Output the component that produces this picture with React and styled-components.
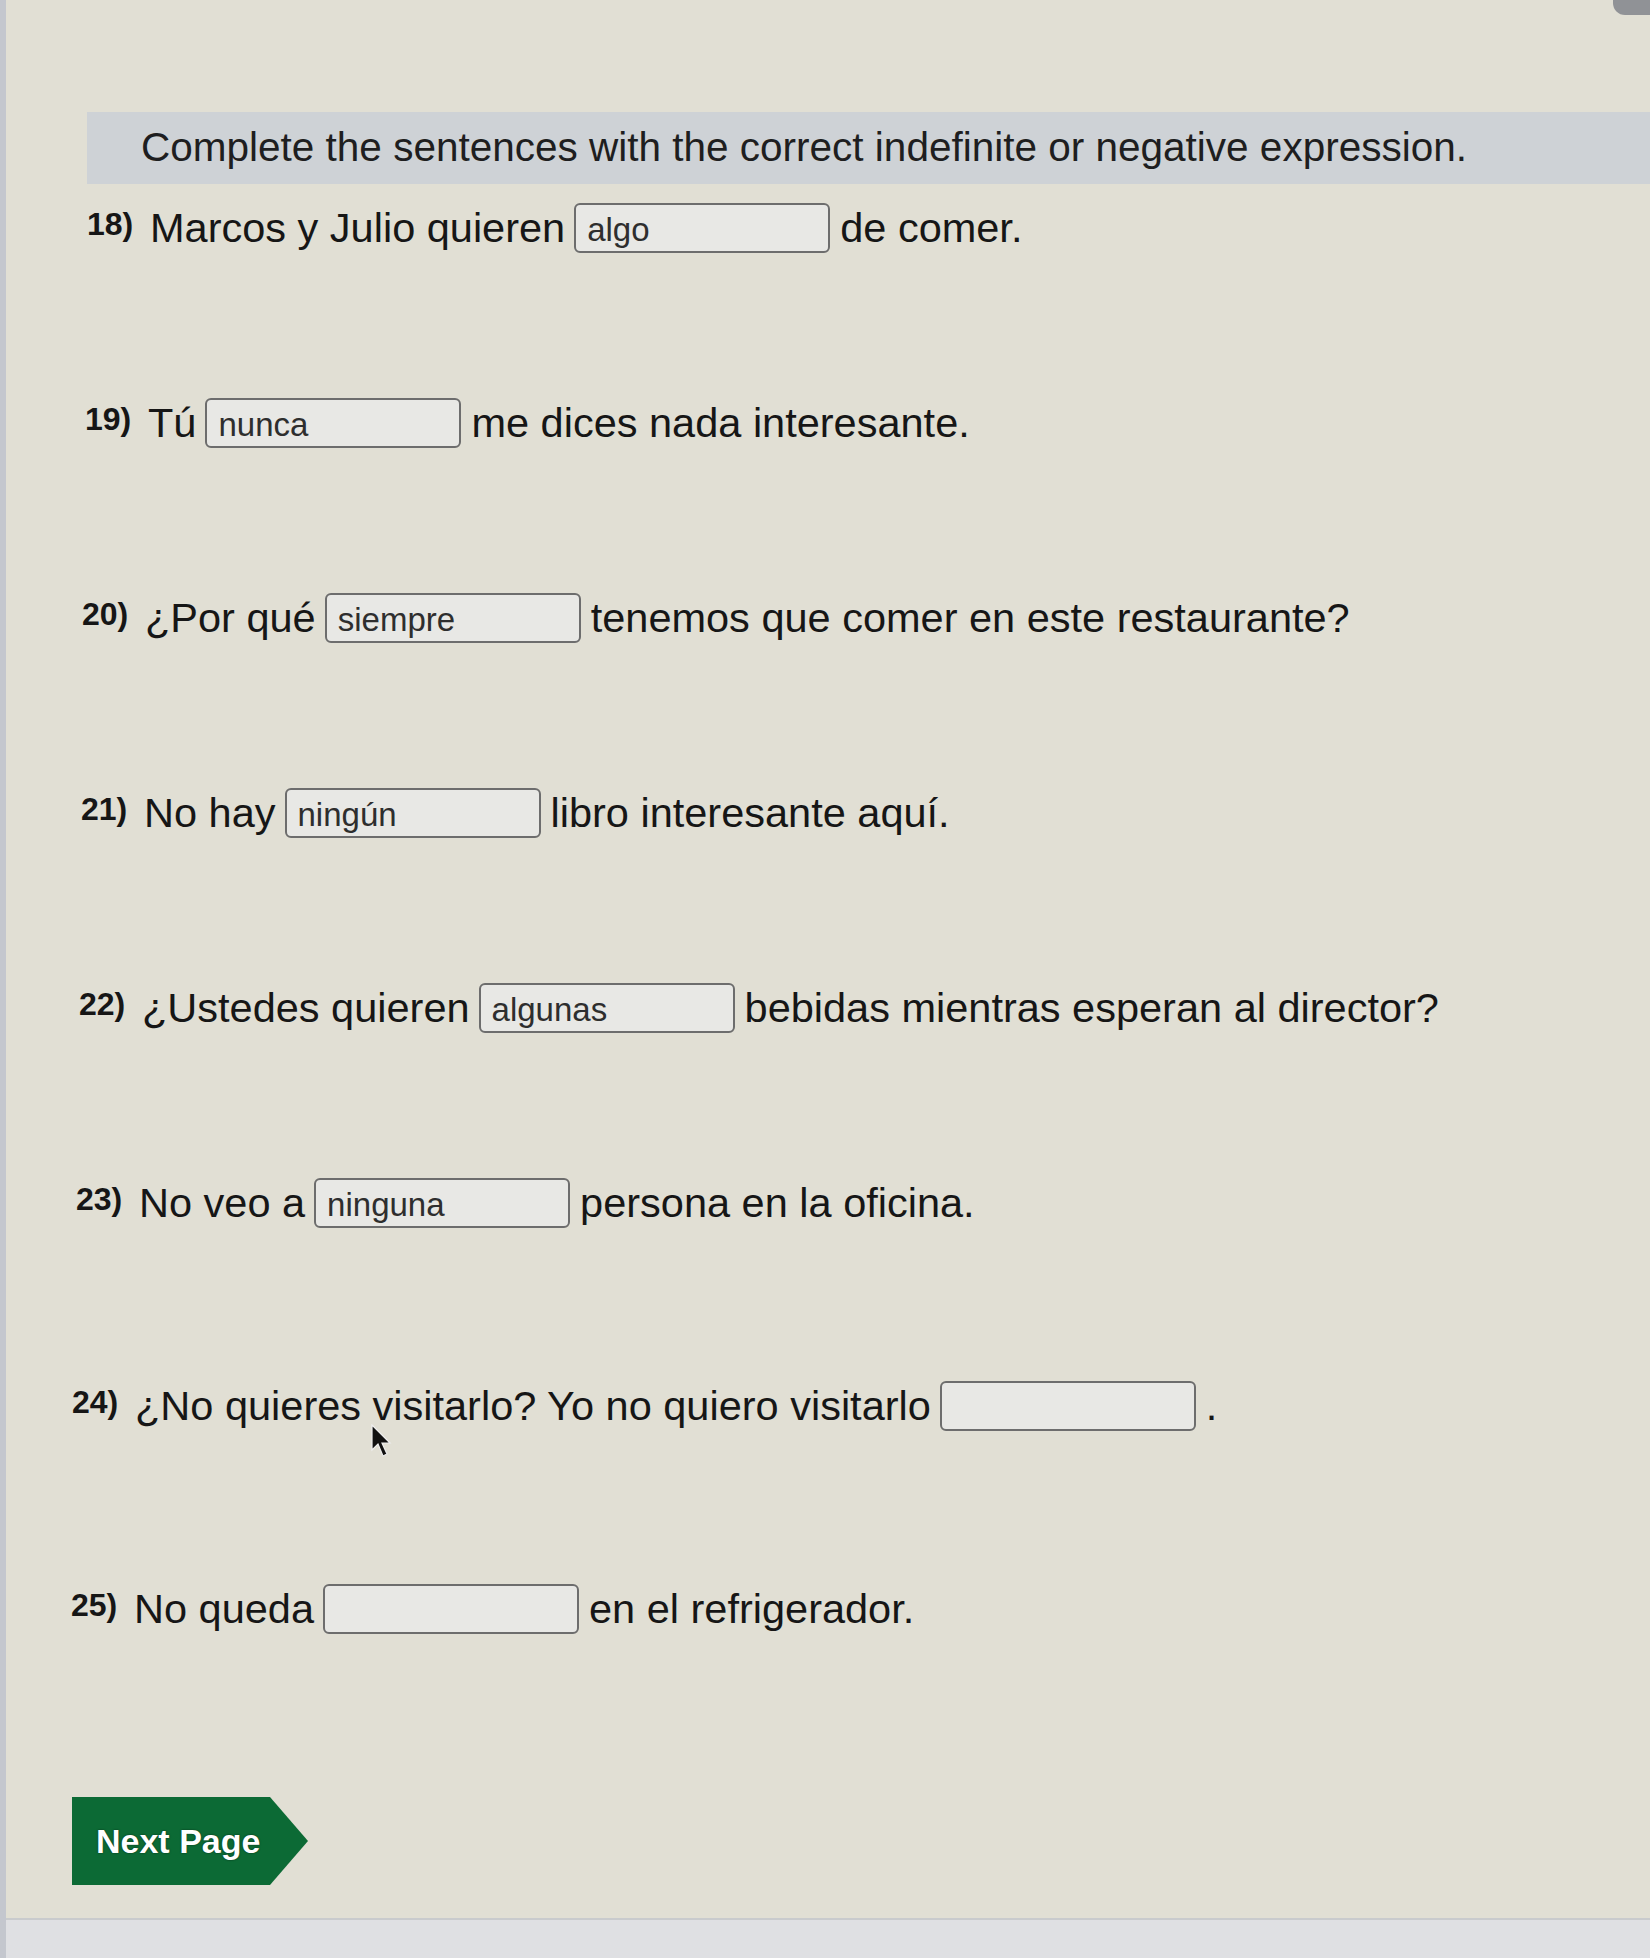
import React from 'react'
import styled, { createGlobalStyle } from 'styled-components'

const GlobalStyle = createGlobalStyle`
  html, body {
    margin: 0;
    padding: 0;
    background: #e1dfd4;
  }
  body {
    font-family: "Liberation Sans", Arial, sans-serif;
  }
`;

const Page = styled.div`
  position: relative;
  width: 1650px;
  height: 1958px;
  box-sizing: border-box;
  background: #e1dfd4;
  border-left: 6px solid #c4c7ce;
  display: flex;
  flex-direction: column;
  overflow: hidden;
`;

const Instructions = styled.div`
  margin-top: 112px;
  margin-left: 81px;
  height: 72px;
  background: #ced2d6;
  display: flex;
  align-items: center;
  padding-left: 54px;
  padding-bottom: 2px;
  box-sizing: border-box;
  font-size: 40.5px;
  color: #1e1e20;
`;

const Questions = styled.div`
  display: flex;
  flex-direction: column;
  gap: 139px;
  margin-top: 16px;
`;

const Row = styled.div`
  height: 56px;
  display: flex;
  align-items: center;
  margin-top: ${p => p.$extra || 0}px;
  padding-left: ${p => p.$left}px;
  font-size: 41.5px;
  color: #161616;
  white-space: nowrap;
`;

const Num = styled.span`
  width: 63px;
  flex: none;
  font-size: 32px;
  font-weight: bold;
  margin-bottom: 8px;
`;

const Words = styled.span`
  margin-right: 9px;
  &:last-child {
    margin-right: 0;
    margin-left: 10px;
  }
`;

const Blank = styled.input`
  width: 256px;
  height: 50px;
  box-sizing: border-box;
  border: 2px solid #6d6d6d;
  border-radius: 6px;
  background: #e8e8e5;
  padding: 4px 11px 0;
  font-family: "Liberation Sans", Arial, sans-serif;
  font-size: 33px;
  color: #2e2e2e;
  outline: none;
  flex: none;
`;

const NextPage = styled.button`
  margin-top: 160px;
  margin-left: 66px;
  width: 236px;
  height: 88px;
  border: none;
  background: #0c6a35;
  clip-path: polygon(0 0, 198px 0, 236px 50%, 198px 100%, 0 100%);
  color: #fff;
  font-family: "Liberation Sans", Arial, sans-serif;
  font-weight: bold;
  font-size: 34px;
  text-align: left;
  padding-left: 24px;
  text-shadow: 0 0 2px rgba(0, 0, 0, 0.6);
  cursor: pointer;
  align-self: flex-start;
`;

const Footer = styled.div`
  margin-top: auto;
  height: 38px;
  background: #dfe0e3;
  border-top: 2px solid #c9cbcd;
`;

const ScrollThumb = styled.div`
  position: absolute;
  top: 0;
  right: 0;
  width: 37px;
  height: 15px;
  background: #909296;
  border-bottom-left-radius: 12px;
`;

const Cursor = styled.svg`
  position: absolute;
  left: 364px;
  top: 1424px;
  width: 22px;
  height: 34px;
`;

const questions = [
  { n: '18)', before: 'Marcos y Julio quieren', value: 'algo', after: 'de comer.', left: 81 },
  { n: '19)', before: 'Tú', value: 'nunca', after: 'me dices nada interesante.', left: 79 },
  { n: '20)', before: '¿Por qué', value: 'siempre', after: 'tenemos que comer en este restaurante?', left: 76 },
  { n: '21)', before: 'No hay', value: 'ningún', after: 'libro interesante aquí.', left: 75 },
  { n: '22)', before: '¿Ustedes quieren', value: 'algunas', after: 'bebidas mientras esperan al director?', left: 73 },
  { n: '23)', before: 'No veo a', value: 'ninguna', after: 'persona en la oficina.', left: 70 },
  { n: '24)', before: '¿No quieres visitarlo? Yo no quiero visitarlo', value: '', after: '.', left: 66, extra: 8 },
  { n: '25)', before: 'No queda', value: '', after: 'en el refrigerador.', left: 65, extra: 8 },
]

export default function App() {
  return (
    <>
      <GlobalStyle />
      <Page>
        <Instructions>Complete the sentences with the correct indefinite or negative expression.</Instructions>
        <Questions>
          {questions.map(q => (
            <Row key={q.n} $left={q.left} $extra={q.extra}>
              <Num>{q.n}</Num>
              <Words>{q.before}</Words>
              <Blank readOnly value={q.value} />
              <Words>{q.after}</Words>
            </Row>
          ))}
        </Questions>
        <NextPage>Next Page</NextPage>
        <Footer />
        <ScrollThumb />
        <Cursor viewBox="0 0 22 34">
          <path d="M2 1 L2 26 L8 20 L13 32 L17 30 L12 19 L20 19 Z" fill="#111" stroke="#eee" strokeWidth="1.2" />
        </Cursor>
      </Page>
    </>
  )
}
